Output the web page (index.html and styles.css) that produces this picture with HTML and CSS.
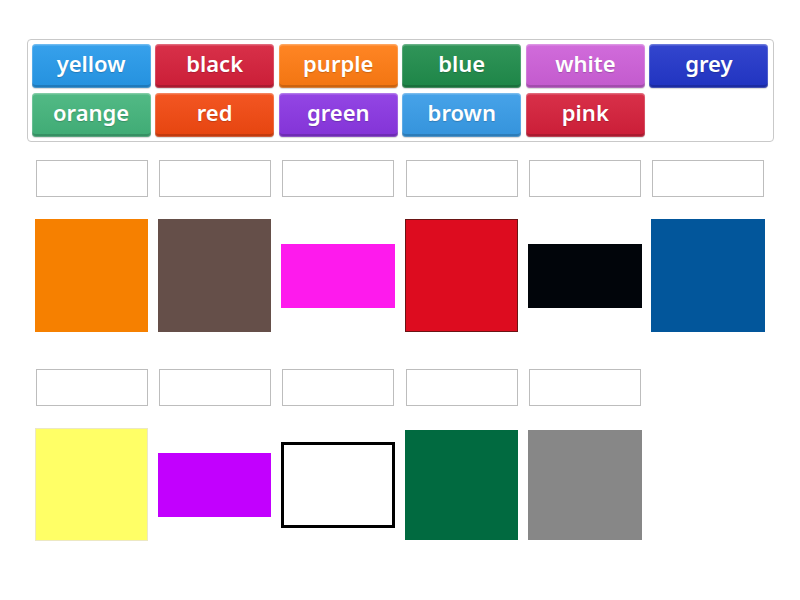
FILE: index.html
```html
<!DOCTYPE html>
<html lang="en">
<head>
<meta charset="utf-8">
<title>Colours – match up</title>
<link rel="stylesheet" href="styles.css">
</head>
<body>
<main class="page">
  <section class="bank">
    <div class="tile t-blue">yellow</div>
    <div class="tile t-crimson">black</div>
    <div class="tile t-orange">purple</div>
    <div class="tile t-green">blue</div>
    <div class="tile t-orchid">white</div>
    <div class="tile t-navy">grey</div>
    <div class="tile t-mint">orange</div>
    <div class="tile t-red">red</div>
    <div class="tile t-violet">green</div>
    <div class="tile t-sky">brown</div>
    <div class="tile t-crimson">pink</div>
  </section>

  <section class="board">
    <div class="group">
      <div class="cell"><div class="slot"></div><div class="pic"><div class="swatch c-orange"></div></div></div>
      <div class="cell"><div class="slot"></div><div class="pic"><div class="swatch c-brown"></div></div></div>
      <div class="cell"><div class="slot"></div><div class="pic"><div class="swatch flat c-pink"></div></div></div>
      <div class="cell"><div class="slot"></div><div class="pic"><div class="swatch c-red"></div></div></div>
      <div class="cell"><div class="slot"></div><div class="pic"><div class="swatch flat c-black"></div></div></div>
      <div class="cell"><div class="slot"></div><div class="pic"><div class="swatch c-blue"></div></div></div>
    </div>
    <div class="group">
      <div class="cell"><div class="slot"></div><div class="pic"><div class="swatch c-yellow"></div></div></div>
      <div class="cell"><div class="slot"></div><div class="pic"><div class="swatch flat c-purple"></div></div></div>
      <div class="cell"><div class="slot"></div><div class="pic"><div class="swatch c-white"></div></div></div>
      <div class="cell"><div class="slot"></div><div class="pic"><div class="swatch c-green"></div></div></div>
      <div class="cell"><div class="slot"></div><div class="pic"><div class="swatch c-grey"></div></div></div>
    </div>
  </section>
</main>
</body>
</html>
```
FILE: styles.css
```css
* { box-sizing: border-box; }

html, body {
  margin: 0;
  background: #ffffff;
}

.page {
  padding-top: 38.5px;
}

/* word bank */
.bank {
  width: 747px;
  margin: 0 auto;
  border: 1px solid #c9c9c9;
  border-radius: 4px;
  padding: 4px;
  display: grid;
  grid-template-columns: repeat(6, 1fr);
  grid-auto-rows: 44.5px;
  column-gap: 4.4px;
  row-gap: 4.5px;
}

.tile {
  display: flex;
  align-items: center;
  justify-content: center;
  padding-bottom: 5px;
  border-radius: 4px;
  color: #ffffff;
  font-family: "Noto Sans", "Open Sans", sans-serif;
  font-weight: 600;
  font-size: 22px;
  text-shadow: 0 1px 1px rgba(0, 0, 0, 0.18);
  box-shadow:
    inset 0 0 0 1px rgba(255, 255, 255, 0.18),
    inset 0 2px 0 rgba(255, 255, 255, 0.12),
    inset 0 -3px 0 rgba(0, 0, 0, 0.16),
    0 1px 1px rgba(0, 0, 0, 0.15);
  background-image: linear-gradient(to bottom, rgba(255, 255, 255, 0.08), rgba(0, 0, 0, 0.05));
}

.t-blue    { background-color: #2699ea; }
.t-crimson { background-color: #d51f3a; }
.t-orange  { background-color: #ff7b12; }
.t-green   { background-color: #1f8c4b; }
.t-orchid  { background-color: #cd5fd8; }
.t-navy    { background-color: #2236ca; }
.t-mint    { background-color: #43b47b; }
.t-red     { background-color: #f24810; }
.t-violet  { background-color: #8a36e2; }
.t-sky     { background-color: #379be7; }

/* answer board */
.board {
  width: 731px;
  margin: 17.5px auto 0;
  display: flex;
  flex-direction: column;
  gap: 37.5px;
}

.group {
  display: grid;
  grid-template-columns: repeat(6, 114px);
  column-gap: 9.4px;
}

.cell {
  display: flex;
  flex-direction: column;
  gap: 22px;
}

.slot {
  width: 112px;
  height: 37px;
  margin-left: 1px;
  border: 1px solid #bdbdbd;
  background: #ffffff;
}

.pic {
  height: 113px;
  display: flex;
  align-items: center;
}

.swatch {
  width: 113.5px;
  height: 113px;
}

.swatch.flat { height: 64px; margin-top: 1px; }

.c-orange { background: #f68000; }
.c-brown  { background: #654f49; }
.c-pink   { background: #fe1aed; }
.c-red    { background: #dd0c1f; border: 1px solid #6a1414; }
.c-black  { background: #01050a; }
.c-blue   { background: #02569b; }
.c-yellow { background: #ffff66; border: 1px solid #ece8c4; }
.c-purple { background: #c200fe; }
.c-white  { background: #ffffff; border: 3px solid #000000; height: 85.5px; margin-top: 1px; }
.c-green  { background: #016a40; height: 110px; margin-top: 1px; }
.c-grey   { background: #878787; height: 110px; margin-top: 1px; }
```
